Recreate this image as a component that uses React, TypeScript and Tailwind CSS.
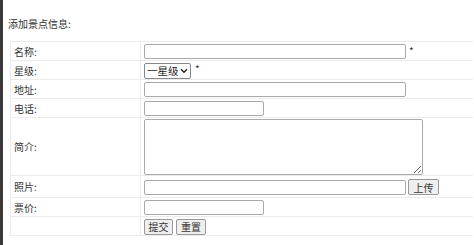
import React from "react";

const font = { fontFamily: '"Noto Sans CJK SC", "Noto Sans", sans-serif' };

const Row = ({ label, h = "h-[19px]", children }: { label: string; h?: string; children: React.ReactNode }) => (
  <tr className={`${h} border-b border-[#ebebeb]`}>
    <td className="w-[130px] pl-[3px] align-middle border-r border-[#ebebeb]">{label}</td>
    <td className="pl-[3px] align-middle whitespace-nowrap">{children}</td>
  </tr>
);

const inputCls = "h-[15px] border border-[#a9a9a9] rounded-[2px] bg-white outline-none align-middle";
const btnCls =
  "h-[15px] px-0 border border-[#999] rounded-[2px] bg-[#efefef] text-[10px] leading-[13px] text-[#333] align-middle whitespace-nowrap";

export default function App() {
  return (
    <div className="flex min-h-[245px] bg-white text-[10px] text-[#333]" style={font}>
      <div className="w-[3px] bg-[#3a3a3a]" />
      <div className="flex-1 pl-[5px] pt-[18px] pr-[1px]">
        <p className="leading-[12px] h-[12px]">添加景点信息:</p>
        <table className="mt-[11px] ml-[2px] w-[463px] border-collapse border-l border-t border-[#ebebeb]">
          <tbody>
            <Row label="名称:">
              <input className={`${inputCls} w-[262px]`} />
              <span className="ml-[3px]">*</span>
            </Row>
            <Row label="星级:">
              <span className="inline-flex items-center h-[16px] w-[47px] border border-[#888] rounded-[2px] bg-white align-middle">
                <select className="appearance-none w-[33px] pl-[2px] pr-0 py-0 bg-transparent text-[10.5px] leading-[13px] text-[#222] outline-none">
                  <option>一星级</option>
                </select>
                <svg width="8" height="6" viewBox="0 0 8 6" className="ml-[2px]">
                  <path d="M1 1.2 L4 4.2 L7 1.2" fill="none" stroke="#222" strokeWidth="1.4" />
                </svg>
              </span>
              <span className="ml-[4px]">*</span>
            </Row>
            <Row label="地址:">
              <input className={`${inputCls} w-[262px]`} />
            </Row>
            <Row label="电话:">
              <input className={`${inputCls} w-[120px]`} />
            </Row>
            <Row label="简介:" h="h-[58px]">
              <textarea className="block h-[56px] w-[279px] border border-[#a9a9a9] rounded-[2px] outline-none" />
            </Row>
            <Row label="照片:" h="h-[22px]">
              <input className={`${inputCls} w-[262px]`} />
              <button className={`${btnCls} ml-[2px] w-[31px] h-[16px]`}>上传</button>
            </Row>
            <Row label="票价:">
              <input className={`${inputCls} w-[120px]`} />
            </Row>
            <Row label="">
              <button className={`${btnCls} w-[29px] h-[16px]`}>提交</button>
              <button className={`${btnCls} ml-[3px] w-[30px] h-[16px]`}>重置</button>
            </Row>
          </tbody>
        </table>
      </div>
    </div>
  );
}
